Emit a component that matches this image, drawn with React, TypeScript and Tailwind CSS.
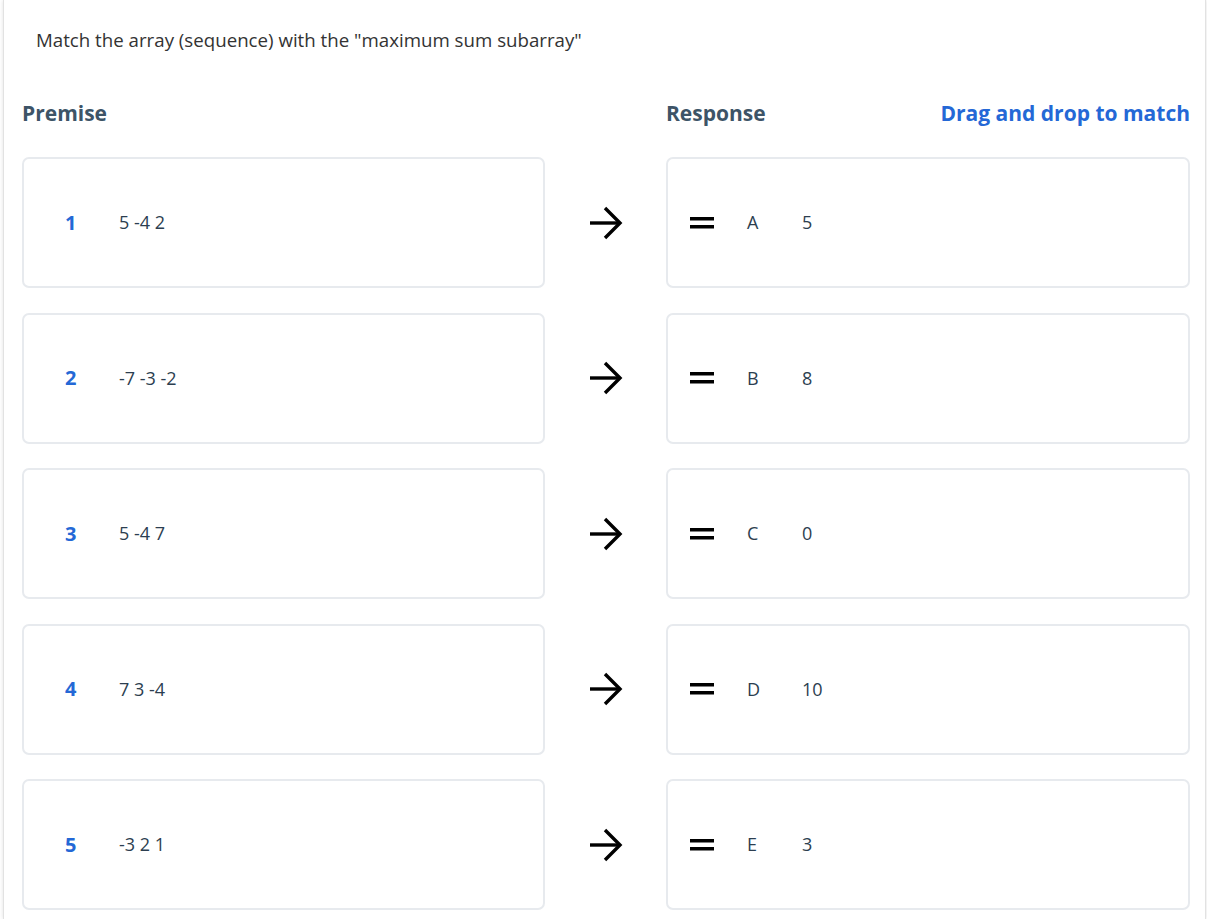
import React from 'react';

const premises = [
  { n: 1, text: '5 -4 2' },
  { n: 2, text: '-7 -3 -2' },
  { n: 3, text: '5 -4 7' },
  { n: 4, text: '7 3 -4' },
  { n: 5, text: '-3 2 1' },
];

const responses = [
  { key: 'A', value: '5' },
  { key: 'B', value: '8' },
  { key: 'C', value: '0' },
  { key: 'D', value: '10' },
  { key: 'E', value: '3' },
];

const ArrowIcon = () => (
  <svg width="34" height="34" viewBox="0 0 34 34" fill="none" stroke="#000" strokeWidth="3.4">
    <path d="M1 17 H31" />
    <path d="M16 2 L31 17 L16 32" />
  </svg>
);

const HandleIcon = () => (
  <svg width="24" height="12" viewBox="0 0 24 12" fill="#000">
    <rect x="0" y="0" width="24" height="3.5" />
    <rect x="0" y="8" width="24" height="3.5" />
  </svg>
);

const App: React.FC = () => {
  return (
    <div className="min-h-screen bg-white font-['Open_Sans',sans-serif]">
      <div className="ml-[3px] mr-[1px] min-h-screen border-x border-[#e2e2e2] pl-[18px] pr-[15px] pt-[28px] shadow-[0_0_4px_rgba(0,0,0,0.12)]">
        <p className="pl-[14px] text-[18.7px] leading-[24px] text-[#333]">
          Match the array (sequence) with the "maximum sum subarray"
        </p>

        <div className="mt-[46px] grid h-[26px] grid-cols-[522px_122px_1fr] items-center">
          <h2 className="text-[21px] font-bold text-[#3d5467]">Premise</h2>
          <div />
          <div className="flex items-center justify-between">
            <h2 className="text-[21px] font-bold text-[#3d5467]">Response</h2>
            <span className="text-[21px] font-bold text-[#2468d6]">Drag and drop to match</span>
          </div>
        </div>

        <div className="mt-[33px] flex flex-col gap-[24.5px]">
          {premises.map((p, i) => (
            <div key={p.n} className="grid grid-cols-[523px_121px_1fr] items-center">
              <div className="flex h-[131px] items-center rounded-[7px] border-2 border-[#e7eaee] pl-[41px]">
                <span className="w-[54px] text-[20px] font-bold text-[#2468d6]">{p.n}</span>
                <span className="text-[18px] text-[#2c3e50]">{p.text}</span>
              </div>
              <div className="flex items-center justify-center">
                <ArrowIcon />
              </div>
              <div className="flex h-[131px] items-center rounded-[7px] border-2 border-[#e7eaee] pl-[22px]">
                <HandleIcon />
                <span className="ml-[33px] w-[55px] text-[18px] text-[#2c3e50]">{responses[i].key}</span>
                <span className="text-[18px] text-[#2c3e50]">{responses[i].value}</span>
              </div>
            </div>
          ))}
        </div>
      </div>
    </div>
  );
};

export default App;
